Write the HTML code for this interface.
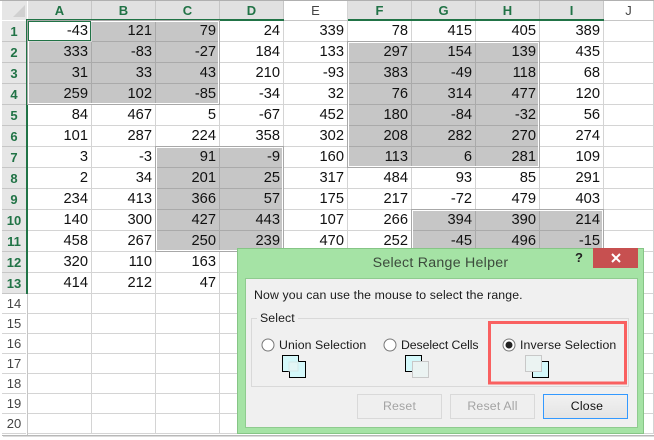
<!DOCTYPE html>
<html><head><meta charset="utf-8">
<style>
html,body{margin:0;padding:0;background:#fff}
body{width:654px;height:440px;position:relative;overflow:hidden;font-family:"Liberation Sans",sans-serif}
.a{position:absolute}
table{position:absolute;left:28px;top:21px;border-collapse:separate;border-spacing:0;table-layout:fixed;width:626px}
td{box-sizing:border-box;height:21px;border-right:1px solid #d4d4d4;border-bottom:1px solid #d4d4d4;text-align:right;padding:0 3px 0 0;font-size:14.67px;line-height:20px;color:#111;overflow:hidden;white-space:nowrap}
td.s{background:#c6c6c6;border-color:#aaa}
tr.e td{height:20px}
.ch{position:absolute;top:1px;height:18px;width:63px;background:#e1e1e1;border-right:1px solid #c6c6c6;text-align:center;font:bold 13px/20px "Liberation Sans",sans-serif;color:#217346}
.ch.n{background:#fff;border-right:1px solid #d4d4d4;font-weight:normal;color:#444}
.rh{position:absolute;left:2px;width:24px;height:20px;background:#e6e6e6;border-bottom:1px solid #c6c6c6;text-align:center;font:bold 13px/22px "Liberation Sans",sans-serif;color:#217346}
.rh.n{background:#fff;border-bottom:1px solid #d4d4d4;font-weight:normal;color:#444;height:19px;line-height:20px}
.sel{position:absolute;box-sizing:border-box;border:1px solid #fff;outline:1px solid #a8a8a8}
.t{position:absolute;font-size:12.3px;line-height:16px;color:#1a1a1a;white-space:nowrap;letter-spacing:.12px}
.b{position:absolute;box-sizing:border-box;width:85px;height:25px;top:394px;border:1px solid #d9d9d9;background:#efefef;color:#a3a3a3;text-align:center;font-size:12.3px;line-height:23px;letter-spacing:.2px}
</style></head><body>
<div class="a" style="left:0;top:0;width:654px;height:1px;background:#b0b0b0"></div>
<div class="a" style="left:2px;top:1px;width:25px;height:19px;background:#e6e6e6"></div>
<svg class="a" style="left:0;top:0" width="28" height="20"><polygon points="25,5 25,17 13,17" fill="#d0d0d0"/></svg>

<div class="ch" style="left:28px">A</div><div class="ch" style="left:92px">B</div><div class="ch" style="left:156px">C</div><div class="ch" style="left:220px">D</div><div class="ch n" style="left:284px;height:19px">E</div><div class="ch" style="left:348px">F</div><div class="ch" style="left:412px">G</div><div class="ch" style="left:476px">H</div><div class="ch" style="left:540px">I</div><div class="ch n" style="left:604px;width:49px;height:19px">J</div>
<div class="a" style="left:284px;top:20px;width:64px;height:1px;background:#c6c6c6"></div>
<div class="a" style="left:604px;top:20px;width:50px;height:1px;background:#c6c6c6"></div>
<div class="a" style="left:26px;top:19px;width:258px;height:2px;background:#217346"></div>
<div class="a" style="left:348px;top:19px;width:256px;height:2px;background:#217346"></div>
<div class="a" style="left:26px;top:19px;width:2px;height:275px;background:#217346"></div>
<div class="a" style="left:27px;top:294px;width:1px;height:141px;background:#c6c6c6"></div>

<div class="rh" style="top:21px">1</div><div class="rh" style="top:42px">2</div><div class="rh" style="top:63px">3</div><div class="rh" style="top:84px">4</div><div class="rh" style="top:105px">5</div><div class="rh" style="top:126px">6</div><div class="rh" style="top:147px">7</div><div class="rh" style="top:168px">8</div><div class="rh" style="top:189px">9</div><div class="rh" style="top:210px">10</div><div class="rh" style="top:231px">11</div><div class="rh" style="top:252px">12</div><div class="rh" style="top:273px">13</div>
<div class="rh n" style="top:294px">14</div><div class="rh n" style="top:314px">15</div><div class="rh n" style="top:334px">16</div><div class="rh n" style="top:354px">17</div><div class="rh n" style="top:374px">18</div><div class="rh n" style="top:394px">19</div><div class="rh n" style="top:414px">20</div>

<table><colgroup><col style="width:64px"><col style="width:64px"><col style="width:64px"><col style="width:64px"><col style="width:64px"><col style="width:64px"><col style="width:64px"><col style="width:64px"><col style="width:64px"><col style="width:50px"></colgroup>
<tr><td>-43</td><td class="s">121</td><td class="s">79</td><td>24</td><td>339</td><td>78</td><td>415</td><td>405</td><td>389</td><td></td></tr>
<tr><td class="s">333</td><td class="s">-83</td><td class="s">-27</td><td>184</td><td>133</td><td class="s">297</td><td class="s">154</td><td class="s">139</td><td>435</td><td></td></tr>
<tr><td class="s">31</td><td class="s">33</td><td class="s">43</td><td>210</td><td>-93</td><td class="s">383</td><td class="s">-49</td><td class="s">118</td><td>68</td><td></td></tr>
<tr><td class="s">259</td><td class="s">102</td><td class="s">-85</td><td>-34</td><td>32</td><td class="s">76</td><td class="s">314</td><td class="s">477</td><td>120</td><td></td></tr>
<tr><td>84</td><td>467</td><td>5</td><td>-67</td><td>452</td><td class="s">180</td><td class="s">-84</td><td class="s">-32</td><td>56</td><td></td></tr>
<tr><td>101</td><td>287</td><td>224</td><td>358</td><td>302</td><td class="s">208</td><td class="s">282</td><td class="s">270</td><td>274</td><td></td></tr>
<tr><td>3</td><td>-3</td><td class="s">91</td><td class="s">-9</td><td>160</td><td class="s">113</td><td class="s">6</td><td class="s">281</td><td>109</td><td></td></tr>
<tr><td>2</td><td>34</td><td class="s">201</td><td class="s">25</td><td>317</td><td>484</td><td>93</td><td>85</td><td>291</td><td></td></tr>
<tr><td>234</td><td>413</td><td class="s">366</td><td class="s">57</td><td>175</td><td>217</td><td>-72</td><td>479</td><td>403</td><td></td></tr>
<tr><td>140</td><td>300</td><td class="s">427</td><td class="s">443</td><td>107</td><td>266</td><td class="s">394</td><td class="s">390</td><td class="s">214</td><td></td></tr>
<tr><td>458</td><td>267</td><td class="s">250</td><td class="s">239</td><td>470</td><td>252</td><td class="s">-45</td><td class="s">496</td><td class="s">-15</td><td></td></tr>
<tr><td>320</td><td>110</td><td>163</td><td></td><td></td><td></td><td></td><td></td><td></td><td></td></tr>
<tr><td>414</td><td>212</td><td>47</td><td></td><td></td><td></td><td></td><td></td><td></td><td></td></tr>
<tr class="e"><td></td><td></td><td></td><td></td><td></td><td></td><td></td><td></td><td></td><td></td></tr>
<tr class="e"><td></td><td></td><td></td><td></td><td></td><td></td><td></td><td></td><td></td><td></td></tr>
<tr class="e"><td></td><td></td><td></td><td></td><td></td><td></td><td></td><td></td><td></td><td></td></tr>
<tr class="e"><td></td><td></td><td></td><td></td><td></td><td></td><td></td><td></td><td></td><td></td></tr>
<tr class="e"><td></td><td></td><td></td><td></td><td></td><td></td><td></td><td></td><td></td><td></td></tr>
<tr class="e"><td></td><td></td><td></td><td></td><td></td><td></td><td></td><td></td><td></td><td></td></tr>
<tr class="e"><td></td><td></td><td></td><td></td><td></td><td></td><td></td><td></td><td></td><td></td></tr>
</table>

<div class="sel" style="left:28px;top:21px;width:191px;height:83px"></div>
<div class="sel" style="left:156px;top:147px;width:127px;height:104px"></div>
<div class="sel" style="left:348px;top:42px;width:191px;height:125px"></div>
<div class="sel" style="left:412px;top:210px;width:191px;height:41px"></div>
<div class="a" style="left:28px;top:21px;width:63px;height:20px;box-sizing:border-box;border:1px solid #217346"></div>

<div class="a" style="left:0;top:435px;width:654px;height:5px;background:#fff"></div>
<div class="a" style="left:2px;top:435px;width:652px;height:1px;background:#b8b8b8"></div>
<div class="a" style="left:3px;top:436px;width:651px;height:1px;background:#dcdcdc"></div>

<!-- dialog -->
<div class="a" style="left:237px;top:248px;width:407px;height:186px;box-sizing:border-box;background:#a5e3a5;border:1px solid #86c586"></div>
<div class="a" style="left:245px;top:278px;width:393px;height:150px;box-sizing:border-box;background:#f0f0f0;border:1px solid #8fcb8f"></div>
<div class="a" style="left:237px;top:253px;width:407px;text-align:center;font-size:14.2px;line-height:20px;color:#3c4a3c;letter-spacing:.25px">Select Range Helper</div>
<div class="a" style="left:575px;top:250px;font:bold 13px/16px 'Liberation Sans',sans-serif;color:#222">?</div>
<div class="a" style="left:593px;top:248px;width:45px;height:20px;background:#c75050"></div>
<svg class="a" style="left:593px;top:248px" width="45" height="20"><path d="M19 6 L27 14 M27 6 L19 14" stroke="#fff" stroke-width="2" fill="none"/></svg>

<div class="t" style="left:254px;top:287px">Now you can use the mouse to select the range.</div>
<div class="a" style="left:251px;top:318px;width:378px;height:69px;box-sizing:border-box;border:1px solid #d9d9d9"></div>
<div class="t" style="left:257px;top:310px;background:#f0f0f0;padding:0 3px;letter-spacing:.1px">Select</div>

<svg class="a" style="left:255px;top:335px" width="25" height="22"><circle cx="13" cy="10" r="6" fill="#fff" stroke="#777" stroke-width="1"/></svg>
<svg class="a" style="left:377px;top:335px" width="25" height="22"><circle cx="13" cy="10" r="6" fill="#fff" stroke="#777" stroke-width="1"/></svg>
<svg class="a" style="left:496px;top:335px" width="25" height="22"><circle cx="13" cy="10" r="6" fill="#fff" stroke="#777" stroke-width="1"/><circle cx="13" cy="10" r="3.5" fill="#222"/></svg>
<div class="t" style="left:279px;top:337px;letter-spacing:.08px">Union Selection</div>
<div class="t" style="left:401px;top:337px;letter-spacing:-.08px">Deselect Cells</div>
<div class="t" style="left:520px;top:337px">Inverse Selection</div>

<svg class="a" style="left:0;top:0" width="654" height="440">
<!-- union -->
<path d="M282.500 355.500H298.500V361.500H305.500V377.500H289.500V371.500H282.500Z" fill="#d4f8fa" stroke="#000"/>
<rect x="289" y="362" width="9" height="9" fill="#e3f6f6" stroke="#d3e8e8"/>
<!-- deselect -->
<path d="M405.500 355.500H421.500V361.500H412.500V371.500H405.500Z" fill="#d4f8fa" stroke="#000"/>
<rect x="412.500" y="361.500" width="16" height="16" fill="#ebf3f2" stroke="#c8c8c8"/>
<!-- inverse -->
<path d="M541.500 361.500H548.500V377.500H532.500V371.500H541.500Z" fill="#d4f8fa" stroke="#000"/>
<rect x="525.500" y="355.500" width="16" height="16" fill="#ebf3f2" stroke="#c8c8c8"/>
<!-- highlight -->
<rect x="489.500" y="322.500" width="136" height="60.500" fill="none" stroke="#f96060" stroke-width="3"/>
</svg>

<div class="b" style="left:357px">Reset</div>
<div class="b" style="left:450px">Reset All</div>
<div class="b" style="left:543px;border-color:#3399ff;background:linear-gradient(#f1f1f1,#e4e4e4);color:#111;padding-left:3px">Close</div>
</body></html>
